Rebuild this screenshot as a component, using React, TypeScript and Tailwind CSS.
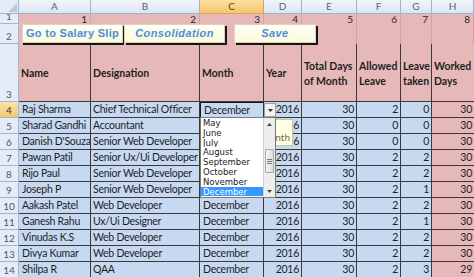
import React from "react";

const COLS = ["A", "B", "C", "D", "E", "F", "G", "H"];

type Row = {
  n: number;
  name: string;
  des: string;
  month: string;
  year: string;
  total: string;
  allowed: string;
  taken: string;
  worked: string;
};

const rows: Row[] = [
  { n: 4, name: "Raj Sharma", des: "Chief Technical Officer", month: "December", year: "2016", total: "30", allowed: "2", taken: "0", worked: "30" },
  { n: 5, name: "Sharad Gandhi", des: "Accountant", month: "", year: "2016", total: "30", allowed: "0", taken: "0", worked: "30" },
  { n: 6, name: "Danish D'Souza", des: "Senior Web Developer", month: "", year: "2016", total: "30", allowed: "0", taken: "0", worked: "30" },
  { n: 7, name: "Pawan Patil", des: "Senior Ux/Ui Developer", month: "", year: "2016", total: "30", allowed: "2", taken: "2", worked: "30" },
  { n: 8, name: "Rijo Paul", des: "Senior Web Developer", month: "", year: "2016", total: "30", allowed: "2", taken: "2", worked: "30" },
  { n: 9, name: "Joseph P", des: "Senior Web Developer", month: "", year: "2016", total: "30", allowed: "2", taken: "1", worked: "30" },
  { n: 10, name: "Aakash Patel", des: "Web Developer", month: "December", year: "2016", total: "30", allowed: "2", taken: "2", worked: "30" },
  { n: 11, name: "Ganesh Rahu", des: "Ux/Ui Designer", month: "December", year: "2016", total: "30", allowed: "2", taken: "1", worked: "30" },
  { n: 12, name: "Vinudas K.S", des: "Web Developer", month: "December", year: "2016", total: "30", allowed: "2", taken: "2", worked: "30" },
  { n: 13, name: "Divya Kumar", des: "Web Developer", month: "December", year: "2016", total: "30", allowed: "2", taken: "2", worked: "30" },
  { n: 14, name: "Shilpa R", des: "QAA", month: "December", year: "2016", total: "30", allowed: "2", taken: "3", worked: "29" },
];

const months = ["May", "June", "July", "August", "September", "October", "November", "December"];

function RowHead({ label, active, h }: { label: string; active?: boolean; h: string }) {
  return (
    <div
      className={`${h} flex items-end justify-center border-r border-b border-[#9eb6ce] text-[10px] leading-[14px] ${
        active ? "bg-gradient-to-b from-[#fbe3a8] to-[#f6c86e] text-[#3b3b3b]" : "bg-[#e4ecf7] text-[#4c5a6c]"
      }`}
    >
      {label}
    </div>
  );
}

export default function App() {
  const cellBase =
    "h-[16px] border-r border-b border-[#3a3a3a] overflow-hidden whitespace-nowrap leading-[15px] text-[10.5px] tracking-[-0.25px] text-[#1e1e1e]";
  return (
    <div className="relative w-[474px] h-[277px] overflow-hidden bg-white" style={{ fontFamily: "Lato, 'Open Sans', sans-serif" }}>
      <div className="grid grid-cols-[19px_72px_109px_64px_38px_55px_44px_31px_42px]">
        {/* column header row */}
        <div className="h-[14px] relative bg-[#e4ecf7] border-r border-b border-[#9eb6ce]">
          <div className="absolute right-[1px] bottom-[1px] w-0 h-0 border-l-[9px] border-l-transparent border-b-[9px] border-b-[#b7c8dc]" />
        </div>
        {COLS.map((c) => (
          <div
            key={c}
            className={`h-[14px] flex items-center justify-center border-r border-b text-[10px] ${
              c === "C"
                ? "bg-gradient-to-b from-[#fbe0a0] to-[#f4c56a] border-[#d7a850] text-[#5a4a2a]"
                : "bg-gradient-to-b from-[#f1f5fb] to-[#dce6f2] border-[#9eb6ce] text-[#55657a]"
            }`}
          >
            {c}
          </div>
        ))}

        {/* row 1 */}
        <RowHead label="1" h="h-[10px]" />
        {[1, 2, 3, 4, 5, 6, 7, 8].map((n) => (
          <div key={n} className="h-[10px] bg-[#e6b8b7] border-r border-[#d7a3a2] text-right pr-[3px] text-[10px] leading-[10px] text-[#2a2a2a] overflow-hidden">
            {n}
          </div>
        ))}

        {/* row 2 */}
        <RowHead label="2" h="h-[20px]" />
        {COLS.map((c) => (
          <div key={c} className="h-[20px] bg-[#e6b8b7] border-r border-[#d7a3a2]" />
        ))}

        {/* row 3 header */}
        <RowHead label="3" h="h-[58px]" />
        {[
          ["Name"],
          ["Designation"],
          ["Month"],
          ["Year"],
          ["Total Days", "of Month"],
          ["Allowed", "Leave"],
          ["Leave", "taken"],
          ["Worked", "Days"],
        ].map((lines, i) => (
          <div
            key={i}
            className={`h-[58px] bg-[#e6b8b7] border-b border-[#3a3a3a] ${i === 7 ? "" : "border-r"} flex flex-col justify-center pl-[2px] pt-[2px] font-bold text-[10.5px] leading-[15px] text-[#1e1e1e] whitespace-nowrap overflow-hidden`}
          >
            {lines.map((l) => (
              <span key={l}>{l}</span>
            ))}
          </div>
        ))}

        {/* data rows */}
        {rows.map((r) => (
          <React.Fragment key={r.n}>
            <RowHead label={String(r.n)} active={r.n === 4} h="h-[16px]" />
            <div className={`${cellBase} bg-[#c6d9f1] pl-[3px]`}>{r.name}</div>
            <div className={`${cellBase} bg-[#c6d9f1] pl-[2px]`}>{r.des}</div>
            <div className={`${cellBase} bg-[#c6d9f1] pl-[3px] ${r.n === 4 ? "border-t border-t-[#1a1a1a] border-l border-l-[#1a1a1a] leading-[13px]" : ""}`}>{r.month}</div>
            <div className={`${cellBase} bg-[#c6d9f1] text-right pr-[2px]`}>{r.year}</div>
            <div className={`${cellBase} bg-[#c6d9f1] text-right pr-[2px]`}>{r.total}</div>
            <div className={`${cellBase} bg-[#c6d9f1] text-right pr-[2px]`}>{r.allowed}</div>
            <div className={`${cellBase} bg-[#c6d9f1] text-right pr-[2px]`}>{r.taken}</div>
            <div className={`${cellBase} bg-[#e6b8b7] text-right pr-[2px] border-r-0`}>{r.worked}</div>
          </React.Fragment>
        ))}
      </div>

      {/* buttons (shapes floating over the sheet) */}
      <div
        className="absolute left-[22px] top-[24px] w-[101px] h-[19px] flex items-center justify-center bg-gradient-to-b from-[#fffff4] to-[#fbf8dc] border border-[#d8d5b8] shadow-[1px_2px_0_#151515] text-[11px] font-bold tracking-[0.3px] text-[#4a8ed8]"
        style={{ fontFamily: "'Liberation Sans', Arial, sans-serif" }}
      >
        Go to Salary Slip
      </div>
      <div
        className="absolute left-[124px] top-[24px] w-[101px] h-[19px] flex items-center justify-center bg-gradient-to-b from-[#fffff4] to-[#fbf8dc] border border-[#d8d5b8] shadow-[2px_2px_0_#151515] text-[11px] font-bold italic tracking-[0.4px] text-[#4a8ed8]"
        style={{ fontFamily: "'Liberation Sans', Arial, sans-serif" }}
      >
        Consolidation
      </div>
      <div
        className="absolute left-[234px] top-[24px] w-[82px] h-[19px] flex items-center justify-center bg-gradient-to-b from-[#fffff4] to-[#fbf8dc] border border-[#d8d5b8] shadow-[2px_2px_0_#151515] text-[11px] font-bold italic tracking-[0.4px] text-[#4a8ed8]"
        style={{ fontFamily: "'Liberation Sans', Arial, sans-serif" }}
      >
        Save
      </div>

      {/* input message tooltip */}
      <div className="absolute left-[240px] top-[119px] w-[53px] h-[27px] bg-[#ffffe1] border border-[#c8c8a0] flex items-end justify-end pr-[2px] pb-[2px] text-[10px] leading-[12px] text-[#6a6a6a]">
        Month
      </div>

      {/* dropdown arrow button in C4 */}
      <div className="absolute left-[264px] top-[103px] w-[12px] h-[14px] bg-[#f3f3f3] border border-[#a0a0a0] flex items-center justify-center">
        <svg width="5" height="3" viewBox="0 0 5 3">
          <path d="M0 0 L5 0 L2.5 3 Z" fill="#333" />
        </svg>
      </div>

      {/* dropdown list */}
      <div className="absolute left-[200px] top-[117px] w-[76px] h-[81px] bg-white border border-[#7a7a7a] flex">
        <div className="flex-1 flex flex-col" style={{ fontFamily: "Tahoma, 'DejaVu Sans', sans-serif" }}>
          {months.map((m) => (
            <div
              key={m}
              className={`h-[9.8px] leading-[10px] text-[8.5px] pl-[2px] whitespace-nowrap overflow-hidden ${
                m === "December" ? "bg-[#3399ff] text-white" : "text-[#222]"
              }`}
            >
              {m}
            </div>
          ))}
        </div>
        <div className="w-[12px] bg-[#ededed] border-l border-[#d0d0d0] flex flex-col">
          <div className="h-[12px] flex items-center justify-center">
            <svg width="5" height="3" viewBox="0 0 5 3">
              <path d="M0 3 L5 3 L2.5 0 Z" fill="#444" />
            </svg>
          </div>
          <div className="mt-[19px] h-[24px] mx-[1px] bg-gradient-to-r from-[#f4f4f4] to-[#dcdcdc] border border-[#a8a8a8] rounded-[1px] flex flex-col items-center justify-center gap-[1px]">
            <div className="w-[5px] h-px bg-[#777]" />
            <div className="w-[5px] h-px bg-[#777]" />
            <div className="w-[5px] h-px bg-[#777]" />
          </div>
          <div className="flex-1" />
          <div className="h-[12px] flex items-center justify-center">
            <svg width="5" height="3" viewBox="0 0 5 3">
              <path d="M0 0 L5 0 L2.5 3 Z" fill="#444" />
            </svg>
          </div>
        </div>
      </div>
    </div>
  );
}
